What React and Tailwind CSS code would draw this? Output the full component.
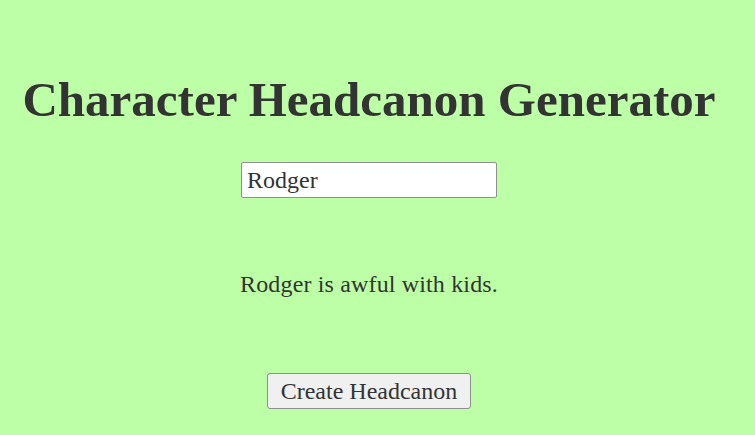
import React from 'react';

const App = () => {
  return (
    <div className="min-h-screen bg-[#bdffa6] text-[#333333] font-['Liberation_Serif','Times_New_Roman',serif] flex flex-col items-center pt-[72px] pr-[17px]">
      <h1 className="text-[49px] font-bold leading-[56px] text-center whitespace-nowrap">
        Character Headcanon Generator
      </h1>

      <input
        type="text"
        defaultValue="Rodger"
        className="mt-[34px] w-[256px] h-[36px] bg-white border border-[#8f8f8f] rounded-[2px] px-[5px] font-['Liberation_Serif','Times_New_Roman',serif] text-[24px] text-[#333333] outline-none"
      />

      <p className="mt-[72px] text-[24px] leading-[28px] tracking-[0.15px]">Rodger is awful with kids.</p>

      <button className="mt-[75px] w-[204px] h-[36px] bg-[#f0f0f0] border border-[#8f8f8f] rounded-[3px] font-['Liberation_Serif','Times_New_Roman',serif] text-[24px] leading-[28px] text-[#333333]">
        Create Headcanon
      </button>
    </div>
  );
};

export default App;
